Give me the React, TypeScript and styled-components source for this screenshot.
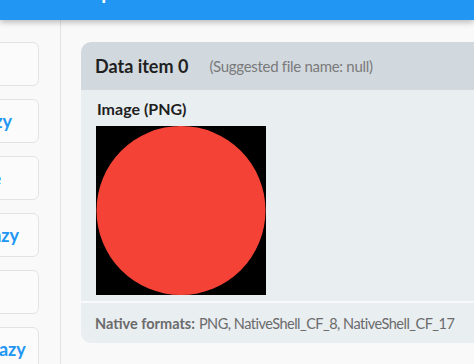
import React from "react";
import styled, { createGlobalStyle } from "styled-components";

const GlobalStyle = createGlobalStyle`
  html, body { margin: 0; padding: 0; }
  body {
    background: #f9f9f9;
    font-family: Lato, "Open Sans", sans-serif;
  }
`;

const Root = styled.div`
  width: 474px;
  height: 364px;
  display: flex;
  flex-direction: column;
  overflow: hidden;
  background: #f9f9f9;
`;

const TopBar = styled.header`
  position: relative;
  z-index: 1;
  flex: 0 0 20px;
  height: 20px;
  background: #2196f3;
  box-shadow: 0 2px 6px rgba(0, 0, 0, 0.28);
  overflow: hidden;
  display: flex;
  padding-left: 78px;
`;

const AppTitle = styled.h1`
  margin: -21px 0 0 0;
  font-size: 20px;
  line-height: 24px;
  font-weight: 700;
  color: #ffffff;
  white-space: nowrap;
`;

const Layout = styled.div`
  flex: 1;
  display: flex;
  min-height: 0;
`;

const Sidebar = styled.nav`
  flex: 0 0 61px;
  border-right: 1px solid #e3e3e3;
  overflow: hidden;
  display: flex;
  flex-direction: column;
  align-items: stretch;
  gap: 13px;
  padding: 22px 21px 0 0;
  box-sizing: border-box;
`;

const SideButton = styled.button`
  flex: 0 0 44px;
  height: 44px;
  width: calc(100% + 85px);
  margin-left: -85px;
  box-sizing: border-box;
  background: #fbfbfb;
  border: 1px solid #e3e3e3;
  border-radius: 6px;
  color: #2196f3;
  font-family: Lato, "Open Sans", sans-serif;
  font-size: 18px;
  font-weight: 700;
  white-space: nowrap;
  display: flex;
  align-items: center;
  justify-content: center;
  padding: 0;
`;

const Main = styled.main`
  flex: 1;
  min-width: 0;
  overflow: hidden;
  padding: 22px 0 0 20px;
`;

const Card = styled.section`
  width: 480px;
  border-radius: 10px;
  overflow: hidden;
  background: #f4f6f7;
`;

const CardHeader = styled.div`
  height: 48px;
  background: #d1d8de;
  display: flex;
  align-items: center;
  gap: 21px;
  padding-left: 14px;
`;

const Title = styled.span`
  font-size: 18px;
  font-weight: 700;
  color: #1f1f1f;
`;

const Hint = styled.span`
  font-size: 15px;
  letter-spacing: -0.3px;
  color: #7a7a7a;
`;

const CardBody = styled.div`
  background: #e9eef1;
  padding: 9px 15px 6px 15px;
  display: flex;
  flex-direction: column;
  gap: 8px;
`;

const FormatLabel = styled.div`
  font-size: 16px;
  line-height: 19px;
  font-weight: 700;
  color: #1f1f1f;
  padding-left: 1px;
`;

const ImageFrame = styled.div`
  width: 170px;
  height: 169px;
  background: #000000;
  display: flex;
`;

const Divider = styled.div`
  height: 2px;
  background: #f7f9fa;
`;

const CardFooter = styled.div`
  height: 40px;
  background: #e9eef1;
  display: flex;
  align-items: center;
  padding-left: 14px;
  font-size: 14.5px;
  letter-spacing: -0.5px;
  color: #6b6b6b;
  white-space: nowrap;
`;

const FooterKey = styled.b`
  font-weight: 700;
  letter-spacing: 0;
  margin-right: 4px;
`;

const sideButtons = [
  "Text",
  "Text lazy",
  "Image",
  "Image lazy",
  "Data",
  "Custom lazy",
];

export default function App() {
  return (
    <>
      <GlobalStyle />
      <Root>
        <TopBar>
          <AppTitle>Clipboard</AppTitle>
        </TopBar>
        <Layout>
          <Sidebar>
            {sideButtons.map((label) => (
              <SideButton key={label}>{label}</SideButton>
            ))}
          </Sidebar>
          <Main>
            <Card>
              <CardHeader>
                <Title>Data item 0</Title>
                <Hint>(Suggested file name: null)</Hint>
              </CardHeader>
              <CardBody>
                <FormatLabel>Image (PNG)</FormatLabel>
                <ImageFrame>
                  <svg width="170" height="169" viewBox="0 0 170 169">
                    <circle cx="85" cy="84.5" r="84.5" fill="#f44336" />
                  </svg>
                </ImageFrame>
              </CardBody>
              <Divider />
              <CardFooter>
                <FooterKey>Native formats:</FooterKey>
                PNG, NativeShell_CF_8, NativeShell_CF_17
              </CardFooter>
            </Card>
          </Main>
        </Layout>
      </Root>
    </>
  );
}
